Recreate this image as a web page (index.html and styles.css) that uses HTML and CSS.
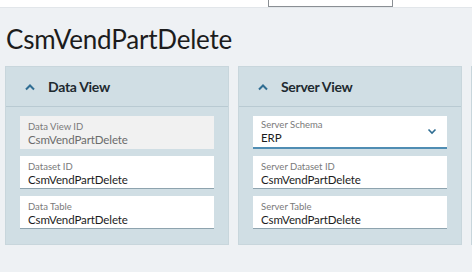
FILE: index.html
```html
<!DOCTYPE html>
<html lang="en">
<head>
  <meta charset="UTF-8">
  <title>CsmVendPartDelete</title>
  <link rel="stylesheet" href="styles.css">
</head>
<body>

  <div id="topbar">
    <div class="tab"></div>
  </div>

  <div id="page">
    <h1 class="title">CsmVendPartDelete</h1>

    <div id="cards">

      <div class="card">
        <div class="card_head">
          <svg class="chev" width="12" height="8" viewBox="0 0 12 8"><path d="M2 6.5 L6 2.5 L10 6.5" fill="none" stroke="#2f6d92" stroke-width="2"/></svg>
          <span>Data View</span>
        </div>
        <div class="card_body">
          <div class="field disabled">
            <p class="label">Data View ID</p>
            <p class="value">CsmVendPartDelete</p>
          </div>
          <div class="field">
            <p class="label">Dataset ID</p>
            <p class="value">CsmVendPartDelete</p>
          </div>
          <div class="field">
            <p class="label">Data Table</p>
            <p class="value">CsmVendPartDelete</p>
          </div>
        </div>
      </div>

      <div class="card">
        <div class="card_head">
          <svg class="chev" width="12" height="8" viewBox="0 0 12 8"><path d="M2 6.5 L6 2.5 L10 6.5" fill="none" stroke="#2f6d92" stroke-width="2"/></svg>
          <span>Server View</span>
        </div>
        <div class="card_body">
          <div class="field select">
            <div>
              <p class="label">Server Schema</p>
              <p class="value">ERP</p>
            </div>
            <svg class="drop" width="10" height="7" viewBox="0 0 10 7"><path d="M1.5 1.5 L5 5 L8.5 1.5" fill="none" stroke="#2f6d92" stroke-width="1.6"/></svg>
          </div>
          <div class="field">
            <p class="label">Server Dataset ID</p>
            <p class="value">CsmVendPartDelete</p>
          </div>
          <div class="field">
            <p class="label">Server Table</p>
            <p class="value">CsmVendPartDelete</p>
          </div>
        </div>
      </div>

      <div class="card"></div>

    </div>
  </div>

</body>
</html>
```

FILE: styles.css
```css
body {
  margin: 0;
  background: #fff;
  font-family: "Lato", "Open Sans", sans-serif;
  width: 472px;
  height: 273px;
  overflow: hidden;
}

#topbar {
  height: 7px;
  display: flex;
  border-bottom: 1px solid #e2e6ea;
}

#topbar .tab {
  margin-left: 268px;
  width: 123px;
  border: 1px solid #8a8f94;
  border-top: none;
  background: #fff;
}

#page {
  background: #eef1f4;
  height: 264px;
  padding: 0 0 0 5px;
  box-sizing: border-box;
  overflow: hidden;
}

.title {
  margin: 0;
  padding: 15px 0 0 1px;
  height: 58px;
  box-sizing: border-box;
  font-size: 26px;
  font-weight: 400;
  color: #1c1c1c;
  letter-spacing: -0.2px;
}

#cards {
  display: flex;
  gap: 9px;
}

.card {
  flex: 0 0 224px;
  height: 179px;
  background: #d0dee4;
  border: 1px solid #c8d6dc;
  box-sizing: border-box;
}

.card_head {
  height: 40px;
  border-bottom: 1px solid #b9cad2;
  display: flex;
  align-items: center;
  padding-left: 18px;
  box-sizing: border-box;
  font-size: 14px;
  font-weight: 700;
  letter-spacing: -0.3px;
  color: #1e2a30;
}

.card_head .chev {
  margin-right: 12px;
}

.card_body {
  padding: 9px 14px 0 14px;
  display: flex;
  flex-direction: column;
  gap: 7px;
}

.field {
  height: 33px;
  background: #fff;
  border-bottom: 1px solid #8ea3ae;
  box-sizing: border-box;
  padding: 5px 8px 0 8px;
}

.field.disabled {
  background: #f1f1f1;
  border-bottom: none;
}

.field.disabled .value {
  color: #6b6b6b;
}

.field.select {
  display: flex;
  justify-content: space-between;
  align-items: center;
  padding-top: 0;
  border-bottom: 2px solid #4f8db3;
}

.field.select .drop {
  margin-right: 2px;
}

.label {
  margin: 0;
  font-size: 9.5px;
  line-height: 11px;
  color: #7a7a7a;
}

.value {
  margin: 0;
  font-size: 11.5px;
  line-height: 15px;
  letter-spacing: -0.1px;
  color: #1c1c1c;
}
```
